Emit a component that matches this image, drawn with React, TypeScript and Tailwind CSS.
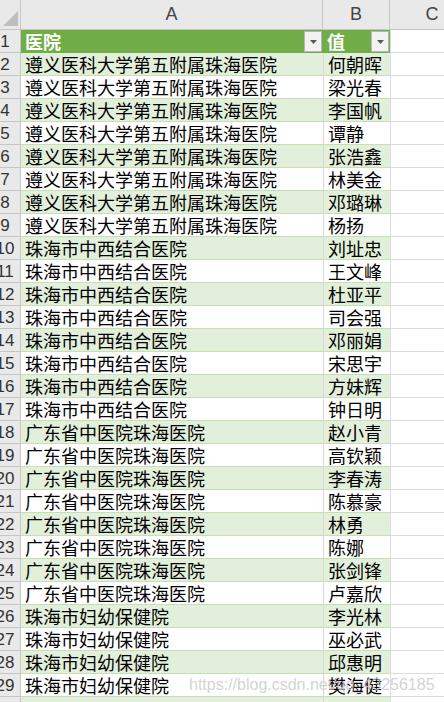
import React from "react";

type Row = { org: string; name: string };

const ZY = "遵义医科大学第五附属珠海医院";
const ZX = "珠海市中西结合医院";
const GD = "广东省中医院珠海医院";
const FY = "珠海市妇幼保健院";

const rows: Row[] = [
  { org: ZY, name: "何朝晖" },
  { org: ZY, name: "梁光春" },
  { org: ZY, name: "李国帆" },
  { org: ZY, name: "谭静" },
  { org: ZY, name: "张浩鑫" },
  { org: ZY, name: "林美金" },
  { org: ZY, name: "邓璐琳" },
  { org: ZY, name: "杨扬" },
  { org: ZX, name: "刘址忠" },
  { org: ZX, name: "王文峰" },
  { org: ZX, name: "杜亚平" },
  { org: ZX, name: "司会强" },
  { org: ZX, name: "邓丽娟" },
  { org: ZX, name: "宋思宇" },
  { org: ZX, name: "方妹辉" },
  { org: ZX, name: "钟日明" },
  { org: GD, name: "赵小青" },
  { org: GD, name: "高钦颖" },
  { org: GD, name: "李春涛" },
  { org: GD, name: "陈慕豪" },
  { org: GD, name: "林勇" },
  { org: GD, name: "陈娜" },
  { org: GD, name: "张剑锋" },
  { org: GD, name: "卢嘉欣" },
  { org: FY, name: "李光林" },
  { org: FY, name: "巫必武" },
  { org: FY, name: "邱惠明" },
  { org: FY, name: "樊海健" },
  { org: "", name: "" },
];

const cjk = "font-['Microsoft_YaHei','Noto_Sans_CJK_SC',sans-serif]";

const RowNum = ({ n }: { n: number }) => (
  <div className="w-[21px] shrink-0 overflow-hidden bg-[#e9e9e9] border-r border-b border-[#c6c6c6] flex items-center">
    <span className="w-[32px] -ml-[11px] shrink-0 text-center text-[17px] leading-none text-[#333] font-['Liberation_Sans',sans-serif]">
      {n}
    </span>
  </div>
);

const FilterBtn = () => (
  <div className="w-[18px] h-[21px] bg-[#f2f2f2] border border-[#b8b8b8] flex items-center justify-center">
    <svg width="7" height="4" viewBox="0 0 7 4">
      <path d="M0 0h7L3.5 4z" fill="#595959" />
    </svg>
  </div>
);

export default function App() {
  return (
    <div className={`relative w-[444px] h-[702px] overflow-hidden bg-white ${cjk}`}>
      {/* column letters */}
      <div className="flex h-[30px] bg-[#e9e9e9] border-b border-[#c6c6c6] font-['Liberation_Sans',sans-serif] text-[18px] text-[#444]">
        <div className="w-[21px] shrink-0 border-r border-[#c6c6c6] flex items-end justify-end pb-[3px] pr-[2px]">
          <svg width="15" height="15" viewBox="0 0 15 15">
            <path d="M15 0V15H0z" fill="#bdbdbd" />
          </svg>
        </div>
        <div className="w-[302px] shrink-0 border-r border-[#c6c6c6] flex items-end justify-center pb-[1px]">A</div>
        <div className="w-[67px] shrink-0 border-r border-[#c6c6c6] flex items-end justify-center pb-[1px]">B</div>
        <div className="w-[84px] shrink-0 flex items-end justify-center pb-[1px]">C</div>
      </div>

      {/* table header row */}
      <div className="flex h-[23px]">
        <RowNum n={1} />
        <div className="w-[302px] shrink-0 bg-[#70ad47] flex items-center justify-between pl-[4px] pr-[1px] text-white text-[18px] font-bold">
          <span>医院</span>
          <FilterBtn />
        </div>
        <div className="w-[67px] shrink-0 bg-[#70ad47] flex items-center justify-between pl-[4px] pr-[1px] text-white text-[18px] font-bold">
          <span>值</span>
          <FilterBtn />
        </div>
        <div className="flex-1 border-b border-l border-[#dcdcdc]" />
      </div>

      {rows.map((r, i) => {
        const band = i % 2 === 0 ? "bg-[#e2efda]" : "bg-white";
        return (
          <div key={i} className="flex h-[23px]">
            <RowNum n={i + 2} />
            <div className={`w-[302px] shrink-0 ${band} border-b border-[#c6e0b4] flex items-center pl-[4px] text-[18px] leading-none text-black whitespace-nowrap`}>
              {r.org}
            </div>
            <div className={`w-[67px] shrink-0 ${band} border-l border-b border-l-[#d9d9d9] border-b-[#c6e0b4] flex items-center pl-[4px] text-[18px] leading-none text-black whitespace-nowrap`}>
              {r.name}
            </div>
            <div className="flex-1 border-b border-l border-[#dcdcdc]" />
          </div>
        );
      })}

      {/* watermark */}
      <div className="absolute left-[189px] top-[677px] text-[16px] leading-none text-[#c8c8c8]/80 font-['Liberation_Sans',sans-serif] whitespace-nowrap pointer-events-none">
        https://blog.csdn.net/qq_43256185
      </div>
    </div>
  );
}
